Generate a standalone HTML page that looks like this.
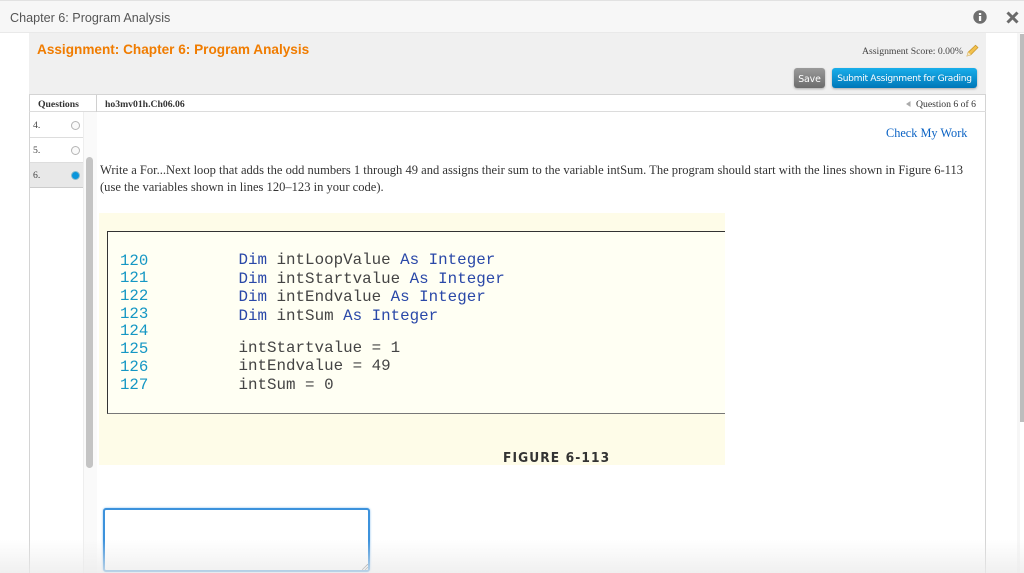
<!DOCTYPE html>
<html><head><meta charset="utf-8"><style>
html,body{margin:0;padding:0;background:#fff}
body{width:1024px;height:573px;overflow:hidden;position:relative;font-family:"Liberation Serif",serif}
div,svg{position:absolute}
.t{white-space:nowrap;line-height:1}
.m{font-family:"Liberation Mono",monospace;font-size:15.85px;white-space:pre;color:#444}
.k{color:#2a48a8}
</style></head><body>
<div style="left:0;top:0;width:1024px;height:33px;background:#f7f7f7;border-top:1px solid #e2e2e2;border-bottom:1px solid #e9e9e9;box-sizing:border-box"></div>
<div class="t" style="left:10px;top:9.5px;font:12.6px/16px 'Liberation Sans',sans-serif;color:#555">Chapter 6: Program Analysis</div>
<svg style="left:973px;top:9.5px" width="14" height="14" viewBox="0 0 14 14"><circle cx="7" cy="7" r="6.7" fill="#6f6f6f"/><rect x="5.9" y="6" width="2.3" height="5" fill="#fff"/><rect x="5.9" y="3" width="2.3" height="2" fill="#fff"/></svg>
<svg style="left:1006px;top:10.5px" width="13" height="13" viewBox="0 0 13 13"><path d="M1.5 1.5L11.5 11.5M11.5 1.5L1.5 11.5" stroke="#6a6a6a" stroke-width="3"/></svg>

<div style="left:29px;top:33px;width:957px;height:62px;background:#f0f0f0"></div>
<div class="t" style="left:37px;top:42px;font:bold 13.6px/16px 'Liberation Sans',sans-serif;color:#f07c00">Assignment: Chapter 6: Program Analysis</div>
<div class="t" style="left:862px;top:47px;font-size:9.7px;color:#444">Assignment Score: 0.00%</div>
<svg style="left:966px;top:44px" width="13" height="13" viewBox="0 0 13 13"><path d="M1 12L2.2 8.2L9.5 1.2L12 3.5L4.8 10.8Z" fill="#f2c14e" stroke="#c8962c" stroke-width=".7"/><path d="M1 12L2.2 8.2L4.8 10.8Z" fill="#f5e6c0"/></svg>
<div style="left:794px;top:68px;width:31px;height:20px;border-radius:3px;background:linear-gradient(#9a9a9a,#6c6c6c);box-shadow:0 1px 2px #aaa"></div>
<div class="t" style="left:794px;top:74px;width:31px;text-align:center;font:9.4px/11px 'DejaVu Sans',sans-serif;letter-spacing:-.1px;color:#fff">Save</div>
<div style="left:832px;top:68px;width:145px;height:20px;border-radius:3px;background:linear-gradient(#19aeea,#0077b8);box-shadow:0 1px 2px #aaa"></div>
<div class="t" style="left:832px;top:74px;width:145px;text-align:center;font:9.1px/11px 'DejaVu Sans',sans-serif;letter-spacing:-.3px;color:#fff">Submit Assignment for Grading</div>

<div style="left:29px;top:94px;width:957px;height:479px;border:1px solid #d4d4d4;border-bottom:0;box-sizing:border-box;background:#fff"></div>
<div style="left:29px;top:111px;width:957px;height:1px;background:#dcdcdc"></div>
<div style="left:96px;top:95px;width:1px;height:478px;background:#d0d0d0"></div>
<div class="t" style="left:38px;top:99.5px;font-weight:bold;font-size:9.7px;color:#333">Questions</div>
<div class="t" style="left:105px;top:99.5px;font-weight:bold;font-size:9.7px;color:#333">ho3mv01h.Ch06.06</div>
<svg style="left:906px;top:101px" width="5" height="6"><path d="M4.5 0V6L0 3Z" fill="#aaa"/></svg>
<div class="t" style="left:916px;top:99.5px;font-size:9.7px;color:#333">Question 6 of 6</div>

<div style="left:83px;top:112px;width:14px;height:461px;background:#fafafa;border-left:1px solid #eee;box-sizing:border-box"></div>
<div style="left:30px;top:112px;width:53px;height:26px;border-bottom:1px solid #ddd;box-sizing:border-box"></div>
<div style="left:30px;top:138px;width:53px;height:25px;border-bottom:1px solid #ddd;box-sizing:border-box"></div>
<div style="left:30px;top:163px;width:53px;height:25px;background:#e8e8e8;border-bottom:1px solid #ccc;box-sizing:border-box"></div>
<div class="t" style="left:33px;top:121px;font-size:9.7px;color:#444">4.</div>
<div class="t" style="left:33px;top:146px;font-size:9.7px;color:#444">5.</div>
<div class="t" style="left:33px;top:171px;font-size:9.7px;color:#444">6.</div>
<div style="left:71px;top:121px;width:7px;height:7px;border-radius:50%;border:1px solid #b5b5b5;background:#fafafa"></div>
<div style="left:71px;top:146px;width:7px;height:7px;border-radius:50%;border:1px solid #b5b5b5;background:#fafafa"></div>
<div style="left:71px;top:171px;width:7px;height:7px;border-radius:50%;border:1px solid #8bc;background:#0a96dc"></div>
<div style="left:86px;top:157px;width:7px;height:311px;border-radius:4px;background:#c4c4c4"></div>

<div class="t" style="left:886px;top:126px;font-size:12.3px;line-height:15px;color:#0a62c4">Check My Work</div>
<div class="t" style="left:100px;top:162px;font-size:12.55px;line-height:17px;color:#333">Write a For...Next loop that adds the odd numbers 1 through 49 and assigns their sum to the variable intSum. The program should start with the lines shown in Figure 6-113</div>
<div class="t" style="left:100px;top:179px;font-size:12.55px;line-height:17px;color:#333">(use the variables shown in lines 120–123 in your code).</div>

<div style="left:99px;top:213px;width:626px;height:252px;background:#fefce8"></div>
<div style="left:107px;top:231px;width:618px;height:183px;background:#fffff3;border:1px solid #333;border-right:0;border-bottom:1px solid #777;box-sizing:border-box"></div>
<div class="m" style="left:120px;top:252.5px;font-size:15.7px;line-height:17.72px;color:#1597c4">120
121
122
123
124
125
126
127</div>
<div class="m" style="left:238.5px;top:251px;line-height:18.7px"><span class="k">Dim</span> intLoopValue <span class="k">As Integer</span>
<span class="k">Dim</span> intStartvalue <span class="k">As Integer</span>
<span class="k">Dim</span> intEndvalue <span class="k">As Integer</span>
<span class="k">Dim</span> intSum <span class="k">As Integer</span></div>
<div class="m" style="left:238.5px;top:338.5px;line-height:18.8px">intStartvalue = 1
intEndvalue = 49
intSum = 0</div>
<div class="t" style="left:503px;top:450px;font:bold 13.6px/17px 'DejaVu Sans Condensed','DejaVu Sans',sans-serif;letter-spacing:1.1px;color:#333">FIGURE 6-113</div>

<div style="left:103px;top:508px;width:267px;height:64px;box-sizing:border-box;border:2px solid #3c92dc;border-radius:3px;background:#fff;box-shadow:0 0 2px #8cc0ee"></div>
<svg style="left:362px;top:564px" width="6" height="6"><path d="M0 6L6 0M3 6L6 3" stroke="#777" stroke-width=".8"/></svg>

<div style="left:1017px;top:33px;width:3px;height:540px;background:#f6f6f6"></div>
<div style="left:1020px;top:34px;width:4px;height:388px;background:#bdbdbd"></div>
<div style="left:0;top:540px;width:1024px;height:33px;background:linear-gradient(rgba(235,235,235,0),rgba(235,235,235,.75))"></div>
</body></html>
